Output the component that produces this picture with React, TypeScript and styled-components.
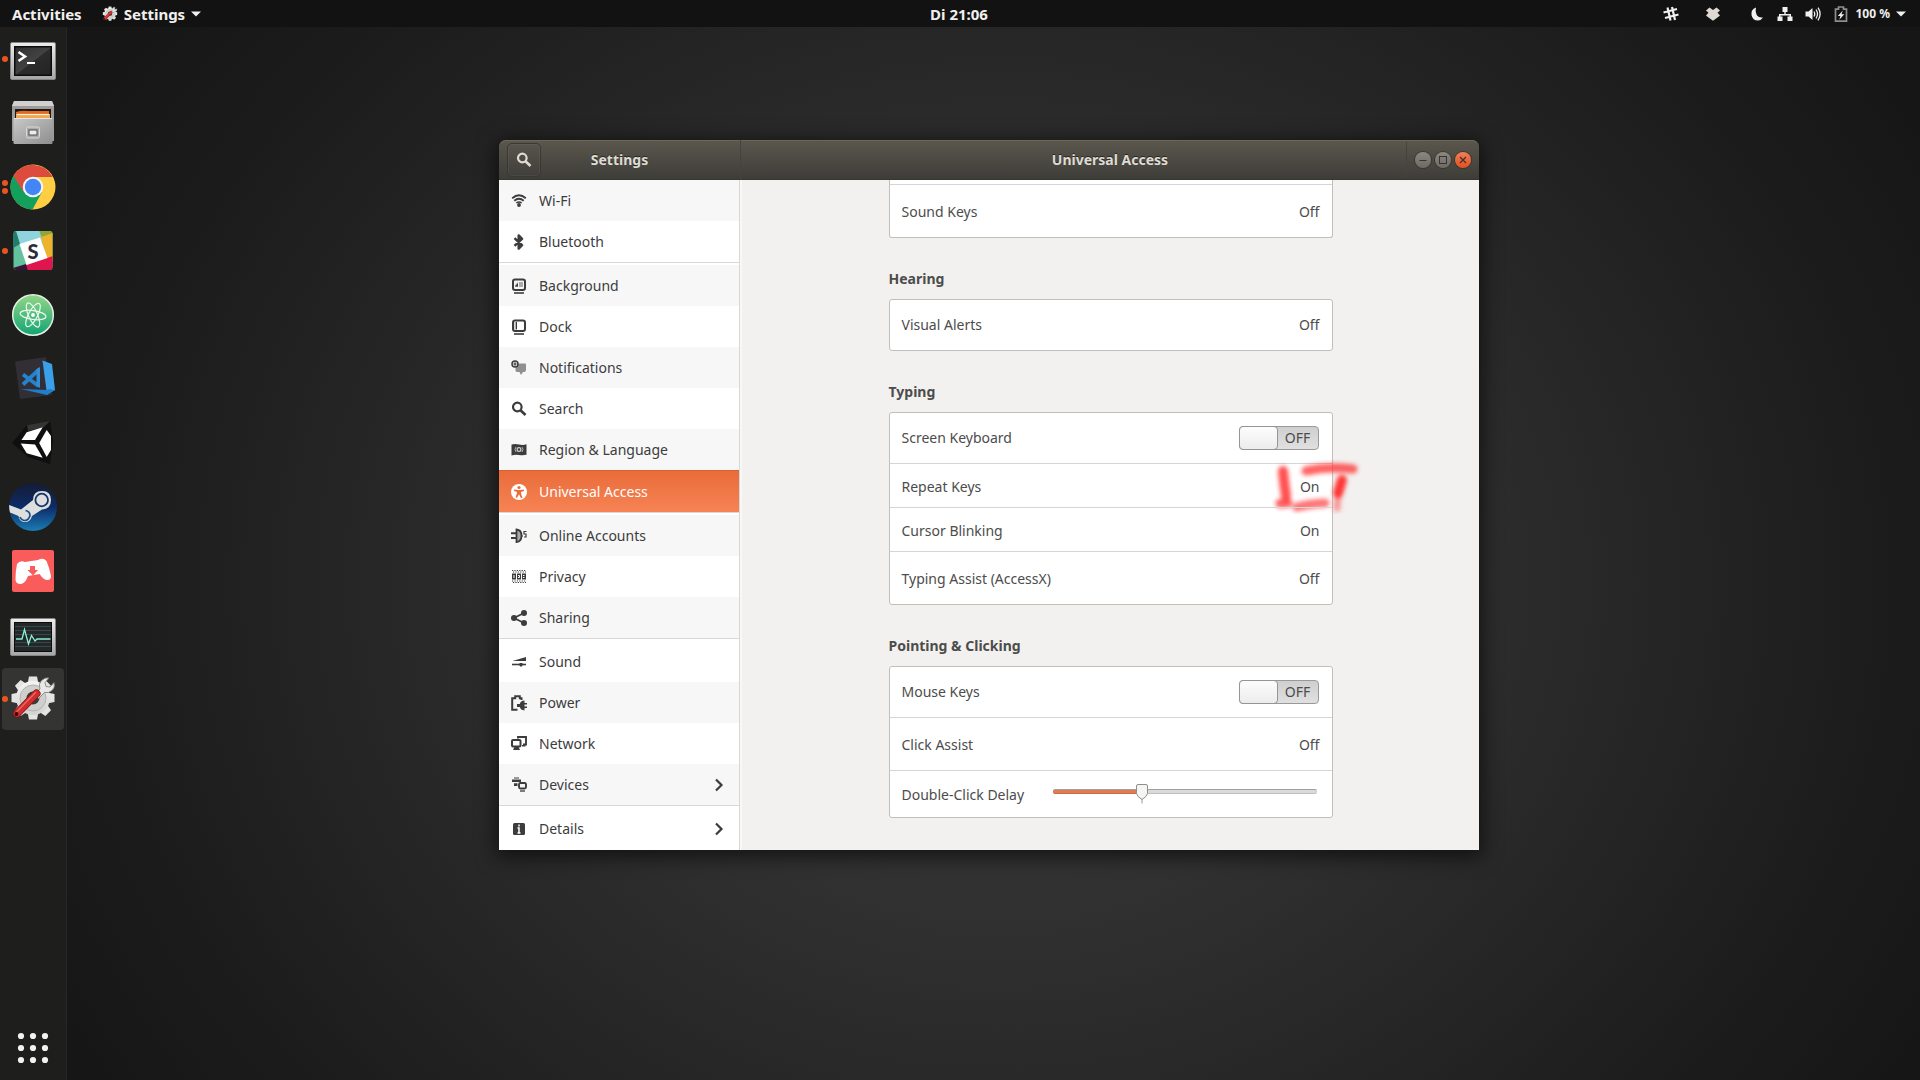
import React from "react";
import styled, { createGlobalStyle, css } from "styled-components";

const GlobalStyle = createGlobalStyle`
  * { box-sizing: border-box; }
  html, body { margin: 0; padding: 0; }
  body {
    font-family: "Noto Sans", "Open Sans", sans-serif;
    font-size: 14px;
    line-height: 20px;
    background: #161616;
    overflow: hidden;
  }
  button { font: inherit; color: inherit; border: 0; background: none; padding: 0; }
`;

/* ---------- shell ---------- */

const Screen = styled.div`
  display: flex;
  flex-direction: column;
  height: 100vh;
  background: radial-gradient(ellipse 56% 86% at 52% 54%, #383838 0%, #313131 35%, #262626 60%, #1c1c1c 82%, #161616 100%);
`;

const TopBar = styled.header`
  display: grid;
  grid-template-columns: 1fr auto 1fr;
  align-items: center;
  height: 27px;
  padding: 0 14px 0 12px;
  background: #121212;
  color: #f0f0ee;
  font-weight: 700;
  flex: none;
`;

const BarGroup = styled.div<{ $end?: boolean; $gap: number }>`
  display: flex;
  align-items: center;
  justify-content: ${(p) => (p.$end ? "flex-end" : "flex-start")};
  gap: ${(p) => p.$gap}px;
`;

const BarButton = styled.button<{ $small?: boolean }>`
  display: flex;
  align-items: center;
  gap: 6px;
  font-weight: 700;
  font-size: ${(p) => (p.$small ? 12 : 15)}px;
  svg { flex: none; }
`;

const TrayGroup = styled.div`
  display: flex;
  align-items: center;
  gap: 26px;
`;

const Workspace = styled.div`
  display: flex;
  flex: 1;
  min-height: 0;
`;

const Dock = styled.nav`
  display: flex;
  flex-direction: column;
  gap: 2px;
  padding: 1px 2px;
  flex: none;
  background: #1e1e1c;
  border-right: 1px solid #272725;
`;

const DockItem = styled.button<{ $active?: boolean; $last?: boolean }>`
  position: relative;
  display: flex;
  align-items: center;
  justify-content: center;
  width: 62px;
  height: 62px;
  border-radius: 4px;
  background: ${(p) => (p.$active ? "#343432" : "transparent")};
  margin-top: ${(p) => (p.$last ? "auto" : "0")};
`;

const Running = styled.span`
  position: absolute;
  left: 0;
  top: 0;
  bottom: 0;
  display: flex;
  flex-direction: column;
  justify-content: center;
  gap: 2px;
`;

const Dot = styled.i`
  width: 6px;
  height: 6px;
  border-radius: 50%;
  background: #e95420;
`;

const Desktop = styled.main`
  position: relative;
  flex: 1;
`;

/* ---------- window ---------- */

const Window = styled.section`
  position: absolute;
  left: 432px;
  top: 113px;
  width: 980px;
  border-radius: 7px 7px 0 0;
  box-shadow: 0 4px 20px 3px rgba(0, 0, 0, 0.6);
  color: #3c3c3c;
`;

const TitleBar = styled.div`
  display: grid;
  grid-template-columns: 242px 1fr;
  height: 40px;
  border-radius: 7px 7px 0 0;
  background: linear-gradient(#5b574d, #3d3c38);
  box-shadow: inset 0 1px #6b675c, inset 0 -1px #373632;
  color: #dfdbd2;
`;

const TitlePart = styled.div<{ $side: number; $line?: boolean }>`
  display: grid;
  grid-template-columns: ${(p) => p.$side}px 1fr ${(p) => p.$side}px;
  align-items: center;
  border-right: ${(p) => (p.$line ? "1px solid #45433d" : "0")};
`;

const Title = styled.h1`
  grid-column: 2;
  margin: 0;
  font-size: 14px;
  line-height: 20px;
  font-weight: 700;
  text-align: center;
  text-shadow: 0 -1px rgba(0, 0, 0, 0.5);
`;

const SearchButton = styled.button`
  display: flex;
  align-items: center;
  justify-content: center;
  width: 34px;
  height: 34px;
  margin-left: 8px;
  border: 1px solid #3a3832;
  border-radius: 5px;
  box-shadow: inset 0 0 0 1px rgba(255, 255, 255, 0.05);
`;

const WindowControls = styled.div`
  display: flex;
  align-items: center;
  justify-content: center;
  gap: 4px;
  height: 36px;
  border-left: 1px solid #45433d;
`;

const ControlButton = styled.button<{ $close?: boolean }>`
  display: flex;
  align-items: center;
  justify-content: center;
  width: 16px;
  height: 16px;
  border-radius: 50%;
  color: #35342f;
  background: ${(p) => (p.$close ? "linear-gradient(#f37e58, #e2501e)" : "linear-gradient(#8b8880, #6c6a63)")};
  box-shadow: 0 0 0 1px rgba(40, 38, 34, 0.5);
`;

const WindowBody = styled.div`
  display: grid;
  grid-template-columns: 240px 1fr;
`;

const Sidebar = styled.nav`
  background: #fff;
`;

const SidebarGroup = styled.ul`
  list-style: none;
  margin: 0;
  padding: 0;
  & + & {
    border-top: 1px solid #d8d8d8;
    padding-top: 2px;
  }
`;

const SidebarLink = styled.a<{ $shade?: boolean; $active?: boolean }>`
  display: flex;
  align-items: center;
  gap: 12px;
  height: 41px;
  padding: 0 12px;
  color: #3c3c3c;
  text-decoration: none;
  background: ${(p) => (p.$shade ? "#f7f7f7" : "#fff")};
  svg { flex: none; }
  span { flex: 1; }
  ${(p) =>
    p.$active &&
    css`
      height: 42px;
      color: #fff;
      background: linear-gradient(#e96c3a, #f78354);
      border-top: 1px solid #e0602e;
    `}
`;

const Content = styled.div`
  display: flex;
  flex-direction: column;
  align-items: center;
  padding: 0 0 32px 2px;
  border-left: 1px solid #d8d7d5;
  background: #f2f1ef;
  box-shadow: inset 2px 0 #f8f8f7;
  color: #4c4c4c;
`;

const Section = styled.section`
  width: 444px;
  max-width: 100%;
`;

const SectionTitle = styled.h2`
  margin: 0;
  padding: 31px 0 10px;
  font-size: 14px;
  line-height: 20px;
  font-weight: 700;
`;

const Card = styled.div<{ $continued?: boolean }>`
  background: #fff;
  border: 1px solid #c2bfbb;
  border-radius: ${(p) => (p.$continued ? "0 0 3px 3px" : "3px")};
  ${(p) => p.$continued && "border-top: 0; padding-top: 4px;"}
`;

const Row = styled.div<{ $h: number; $line?: boolean }>`
  position: relative;
  display: flex;
  align-items: center;
  justify-content: space-between;
  height: ${(p) => p.$h}px;
  padding: 0 12px;
  ${(p) =>
    p.$line &&
    css`
      height: ${p.$h + 1}px;
      padding-top: 2px;
      border-top: 1px solid #d5d5d5;
    `}
`;

const Value = styled.span``;

const Switch = styled.label`
  display: flex;
  width: 80px;
  height: 24px;
  margin-right: 1px;
  border: 1px solid #9b9996;
  border-radius: 4px;
  background: linear-gradient(#cfcfcf, #e0e0e0);
`;

const SwitchInput = styled.input`
  appearance: none;
  margin: -1px 0 -1px -1px;
  width: 39px;
  height: 24px;
  border: 1px solid #979592;
  border-radius: 4px;
  background: linear-gradient(#fdfdfd, #ececec);
`;

const SwitchText = styled.span`
  flex: 1;
  line-height: 22px;
  text-align: center;
`;

const sliderThumb =
  "url(\"data:image/svg+xml,%3Csvg xmlns='http://www.w3.org/2000/svg' width='12' height='20'%3E%3Cpath d='M6 15v4.500' stroke='%23999'/%3E%3Cpath d='M2 .5h8q1.500 0 1.500 1.500v7.500Q10.500 13 6 15.500Q1.500 13 .5 9.500V2Q.5 .5 2 .5z' fill='%23f5f5f5' stroke='%23908e8b'/%3E%3C/svg%3E\")";

const Slider = styled.input`
  appearance: none;
  width: 264px;
  height: 20px;
  margin: 0 3px 8px 0;
  background: none;
  &::-webkit-slider-runnable-track {
    height: 5px;
    border-radius: 2px;
    border-top: 1px solid #a3a09c;
    background: linear-gradient(90deg, #e27b50 0 33%, #dadada 33%);
    box-shadow: inset 0 -1px rgba(0, 0, 0, 0.12);
  }
  &::-webkit-slider-thumb {
    appearance: none;
    width: 12px;
    height: 20px;
    margin-top: -6px;
    border: 0;
    background: ${sliderThumb} no-repeat;
  }
`;

const Scribble = styled.svg`
  position: absolute;
  right: -32px;
  top: -10px;
  pointer-events: none;
`;

/* ---------- small icons (16 × 16) ---------- */

const glyphs: Record<string, React.ReactNode> = {
  wifi: (
    <g fill="none" stroke="currentColor" strokeWidth="1.8">
      <path d="M1.200 5.200Q8 -.6 14.800 5.200" />
      <path d="M3.300 7.700Q8 3.800 12.700 7.700" />
      <path d="M5.300 10Q8 7.800 10.700 10" strokeWidth="1.500" />
      <circle cx="8" cy="12" r="1.900" fill="currentColor" stroke="none" />
    </g>
  ),
  bluetooth: <path d="M3.500 4.200L11 11.200L7.700 14.500V1.500L11 4.800L3.500 11.800" fill="none" stroke="currentColor" strokeWidth="2.500" strokeLinejoin="round" />,
  background: (
    <>
      <rect x="2" y="1.500" width="12" height="10.500" rx="2" fill="none" stroke="currentColor" strokeWidth="2" />
      <path d="M7 4v5H4v-2zM8 4h4v5H8z" fill="currentColor" opacity=".4" />
      <path d="M4 8.500L7 5v3.500z" fill="currentColor" />
      <path d="M3 15h10" stroke="currentColor" strokeWidth="1.600" />
    </>
  ),
  dock: (
    <>
      <rect x="2" y="1.500" width="12" height="10.500" rx="2" fill="none" stroke="currentColor" strokeWidth="2" />
      <path d="M5.500 3v7.500" stroke="currentColor" />
      <path d="M3.500 3h1.500v7.500H3.500z" fill="currentColor" opacity=".4" />
      <path d="M3 15h10" stroke="currentColor" strokeWidth="1.600" />
    </>
  ),
  notifications: (
    <>
      <path d="M8 3.500h6q1 0 1 1V10q0 2-2 2h-1l-2 3-1.500-3H6q-1.500 0-1.500-2V8z" fill="currentColor" opacity=".55" />
      <circle cx="4" cy="4" r="3" fill="#fff" stroke="currentColor" strokeWidth="1.500" />
      <path d="M4 2.300v3.400M2.300 4h3.400" stroke="currentColor" strokeWidth="1.200" />
    </>
  ),
  search: (
    <g fill="none" stroke="currentColor">
      <circle cx="6.300" cy="6" r="4.300" strokeWidth="2.200" />
      <path d="M9.500 9.200L14.500 14" strokeWidth="2.600" />
    </g>
  ),
  region: (
    <>
      <path d="M.5 2.500Q4 1.500 8 2.500T15.500 2.200V12.800Q12 13.600 8 13T.5 13.500z" fill="currentColor" />
      <g fill="none" stroke="#d0d0d0" strokeWidth=".8">
        <circle cx="8" cy="7.500" r="1.900" strokeWidth="1.200" />
        <path d="M5 5Q3 7.500 5 10M11 5Q13 7.500 11 10" />
      </g>
    </>
  ),
  access: (
    <>
      <circle cx="8" cy="8" r="8" fill="#fff" />
      <circle cx="8" cy="3.500" r="1.600" fill="#e96c3a" />
      <path d="M3 5.500l3.500.6h3l3.500-.6v1.600l-3 .9.300 2.500 1.200 3.200-1.500.5L8 10.200l-2 3.500-1.500-.5 1.200-3.200.3-2-3-.9z" fill="#e96c3a" />
    </>
  ),
  accounts: (
    <>
      <path d="M5.500 1.500Q10.500 2 10.500 7.700T5.500 14z" fill="#aaa" stroke="currentColor" strokeWidth="1.800" />
      <path d="M0 5.200h5M0 10h5" stroke="currentColor" strokeWidth="2" />
      <path d="M10.500 8h1.500M15.500 3.500h-2.500v2.500h2v3h-2" fill="none" stroke="currentColor" strokeWidth="1.200" />
    </>
  ),
  privacy: (
    <>
      <path d="M1 1.500h14M2 3h13M1 12h14M2 13.500h13" stroke="currentColor" strokeDasharray="1.200 1.200" />
      <path d="M1 4.500h4v6H1zM6 4.500h4v6H6zM11 4.500h4v6h-4z" fill="currentColor" />
      <path d="M3 6v3M7 6.500h1.500v2H7M12 6.500h1.500M12 8.500h1.500" stroke="#fff" fill="none" />
    </>
  ),
  sharing: (
    <>
      <path d="M13 3L3 8l10 5" fill="none" stroke="currentColor" strokeWidth="1.800" />
      <circle cx="13" cy="3" r="3" fill="currentColor" />
      <circle cx="3" cy="8" r="3" fill="currentColor" />
      <circle cx="13" cy="13" r="3" fill="currentColor" />
    </>
  ),
  sound: (
    <>
      <path d="M1.500 7L15 3v4z" fill="currentColor" />
      <path d="M1 10.500h14" stroke="currentColor" strokeWidth="1.600" />
      <path d="M8.500 9h3v2.500l-1.500 1.500-1.500-1.500z" fill="currentColor" />
    </>
  ),
  power: (
    <>
      <path d="M10.500 5V3.200H8.800V1.200H4.200V3.200H1.200V14.800H6.500" fill="none" stroke="currentColor" strokeWidth="2" />
      <path d="M13.500 5.500q-4 .3-4.700 3.500H6v3h2.800q.7 3 4.700 3.500v-2.500H16v-1.500h-2.500V9.500H16V8h-2.500z" fill="currentColor" />
    </>
  ),
  network: (
    <>
      <path d="M7 2.500V1h8v7.500h-3" fill="none" stroke="currentColor" strokeWidth="1.900" />
      <path d="M11 9h3.500v1.500H11z" fill="currentColor" />
      <rect x="1" y="4" width="8.500" height="6.500" rx="1" fill="none" stroke="currentColor" strokeWidth="2" />
      <path d="M3.500 11h4l1.500 3h-7z" fill="currentColor" />
    </>
  ),
  devices: (
    <>
      <path d="M3 1h5" stroke="currentColor" />
      <path d="M1 2.500h9V5H1zM3 6.200h3.500v2.800H3z" fill="currentColor" />
      <rect x="8" y="6" width="7" height="5.500" rx="1.500" fill="none" stroke="currentColor" strokeWidth="1.900" />
      <path d="M9 14h5" stroke="currentColor" strokeWidth="1.300" />
    </>
  ),
  details: (
    <>
      <rect x="2" y="2" width="12" height="12" rx="1.500" fill="currentColor" />
      <path d="M8 3.500v2M6.500 7H8v5M6.500 12h3" stroke="#fff" strokeWidth="1.500" fill="none" />
    </>
  ),
  chevron: <path d="M5 2.500l5.500 5.500L5 13.500" fill="none" stroke="currentColor" strokeWidth="2.200" />,
  hash: <path d="M4.500 1.500l3 13M9 1l3 13M.5 6.500L14 3M2 12l13.500-3.500" stroke="currentColor" strokeWidth="2.200" />,
  dropbox: <path d="M4.500 1.500L8 4l3.500-2.500L15 4.500l-2.500 2.300L15 9.500l-2.500 2L8 14.800 3.500 11.500 1 9.500l2.500-2.700L1 4.500z" fill="#dedad2" />,
  moon: <path d="M7 1.500Q1.500 3.500 2.500 9T9 14.500q3 0 5-3Q9 12 7.500 8.500T7 1.500z" fill="currentColor" />,
  lan: <path d="M5.500 1h5v5H8.700v2H14v2.500h1.500V15h-5v-4.500h2V9.400h-9v1.100h2V15H.5v-4.500H2V8h5.300V6H5.500z" fill="currentColor" />,
  volume: (
    <>
      <path d="M.5 5.500h3L7.500 2v12l-4-3.500h-3z" fill="currentColor" />
      <path d="M9 5.500q1.500 2.500 0 5M11 3.500q3 4.500 0 9M13 1.700q4.200 6.300 0 12.600" fill="none" stroke="currentColor" strokeWidth="1.300" />
    </>
  ),
  battery: (
    <>
      <path d="M2.500 3.200h3V1h5v2.200h3v12h-11z" fill="none" stroke="#8e8e8c" strokeWidth="1.700" />
      <path d="M9.800 4.500L4.800 10h2.600L6.300 13.800l5-5.500H8.500z" fill="currentColor" />
    </>
  ),
};

const Glyph = ({ name, size = 16 }: { name: string; size?: number }) => (
  <svg width={size} height={size} viewBox="0 0 16 16" aria-hidden="true">
    {glyphs[name]}
  </svg>
);

const Caret = () => (
  <svg width="10" height="6" viewBox="0 0 10 6" aria-hidden="true">
    <path d="M0 .5h10L5 5.500z" fill="currentColor" />
  </svg>
);

/* ---------- dock icons (48 × 48) ---------- */

const teeth = Array.from({ length: 8 }, (_, i) => i * 45);

const GearArt = () => (
  <>
    <defs>
      <linearGradient id="gearFill" x1="0" y1="0" x2="0" y2="1">
        <stop offset="0" stopColor="#f4f4f2" />
        <stop offset="1" stopColor="#d2d2d0" />
      </linearGradient>
    </defs>
    <g fill="#e4e4e2">
      {teeth.map((a) => (
        <path key={a} d="M18.500 9L20 1.500h8L29.500 9z" transform={`rotate(${a} 24 23)`} />
      ))}
    </g>
    <circle cx="24" cy="23" r="17" fill="url(#gearFill)" />
    <circle cx="24" cy="23" r="13" fill="#cfcfcd" stroke="#aaa" strokeWidth=".8" />
    <circle cx="24" cy="23" r="6.500" fill="#3b3b39" />
    <path d="M25 20l6-6q-2-5 1.500-8.500t7.500-2.500l-4 4.500 1 4 4 .5 4-4.500q1.500 5-2 8t-7.500 2l-6 6z" fill="#e8e8e6" stroke="#777" strokeWidth=".8" />
    <path d="M27.500 18.500L8 38.500" stroke="#7e1012" strokeWidth="8" strokeLinecap="round" />
    <path d="M27.500 18.500L8 38.500" stroke="#d22d2d" strokeWidth="6.600" strokeLinecap="round" />
    <path d="M26.500 17.500L8 36.500" stroke="#ec6a66" strokeWidth="1.300" strokeLinecap="round" />
    <circle cx="7.500" cy="39" r="1.900" fill="#3a0a0b" />
  </>
);

const Frame = ({ id }: { id: string }) => (
  <>
    <defs>
      <linearGradient id={`${id}Frame`} x1="0" y1="0" x2="0" y2="1">
        <stop offset="0" stopColor="#ededed" />
        <stop offset="1" stopColor="#a6a6a6" />
      </linearGradient>
      <linearGradient id={`${id}Glass`} x1="0" y1="0" x2="1" y2="1">
        <stop offset="0" stopColor="#303030" />
        <stop offset=".5" stopColor="#424242" />
        <stop offset=".52" stopColor="#2c2c2c" />
        <stop offset="1" stopColor="#242424" />
      </linearGradient>
    </defs>
    <rect x="1.500" y="7.500" width="45" height="37" rx="1.500" fill={`url(#${id}Frame)`} stroke="#858585" />
    <rect x="5" y="11" width="38" height="30" fill="#0c0c0c" />
  </>
);

const dockArt: Record<string, React.ReactNode> = {
  Terminal: (
    <>
      <Frame id="term" />
      <rect x="6.500" y="12.500" width="35" height="27" fill="url(#termGlass)" />
      <path d="M9.500 17l6.500 4.500-6.500 4.500" fill="none" stroke="#fff" strokeWidth="2.600" />
      <path d="M18 28h8" stroke="#fff" strokeWidth="2" />
    </>
  ),
  Files: (
    <>
      <defs>
        <linearGradient id="drawer" x1="0" y1="0" x2="1" y2="1">
          <stop offset="0" stopColor="#c9c9c9" />
          <stop offset="1" stopColor="#8d8d8d" />
        </linearGradient>
      </defs>
      <path d="M5 2h38l2 5v35H3V7z" fill="#9c9c9c" />
      <path d="M5 2h38l2 5H3z" fill="#d0d0d0" />
      <rect x="6" y="10" width="36" height="11" fill="#1e1712" />
      <path d="M7 13q6-2 12-1h21v8H7z" fill="#e06a24" />
      <path d="M7 15h34v6H7z" fill="#f3a850" />
      <path d="M8 15.500h32" stroke="#fff3df" strokeWidth="1.200" />
      <rect x="4.500" y="19" width="39" height="26" rx="1" fill="url(#drawer)" />
      <path d="M5 19.500h38" stroke="#e5e5e5" />
      <rect x="17.500" y="28" width="13" height="11" rx="1.500" fill="#ababab" stroke="#d8d8d8" />
      <rect x="20" y="31" width="8" height="5" fill="#ededed" stroke="#4c4c4c" />
    </>
  ),
  Chrome: (
    <>
      <circle cx="24" cy="24" r="22.500" fill="#ffce42" />
      <path d="M24 24L4.500 12.700A22.500 22.500 0 0 0 23.500 46.500L33 29z" fill="#13a05c" />
      <path d="M4.500 12.700A22.500 22.500 0 0 1 43.700 14H24L14 28.500z" fill="#dd4b3e" />
      <circle cx="24" cy="24" r="10.300" fill="#f4f4f4" />
      <circle cx="24" cy="24" r="8.200" fill="#4285f4" />
    </>
  ),
  Slack: (
    <>
      <defs>
        <clipPath id="slackClip">
          <rect x="4.500" y="4" width="39" height="39" rx="3" />
        </clipPath>
      </defs>
      <g clipPath="url(#slackClip)">
        <rect width="48" height="48" fill="#63c1a0" />
        <path d="M4 4h36v10L11 17z" fill="#8fd3dd" />
        <path d="M4 4h3l4 13-7 4z" fill="#1f7d6a" />
        <path d="M30 3h15v4L33 12z" fill="#8fa63c" />
        <path d="M32 10l12-4v28l-6 2z" fill="#ecb32d" />
        <path d="M17 38l27-9v15H17z" fill="#df1550" />
        <path d="M4 41l13-4 2 7H4z" fill="#371438" />
      </g>
      <path d="M10.500 17L31 10.500 38.500 31 17.500 38z" fill="#fff" />
      <text x="24" y="31.500" textAnchor="middle" fontFamily="Lato, sans-serif" fontWeight="900" fontSize="20" fill="#2b2e38">S</text>
    </>
  ),
  Atom: (
    <>
      <defs>
        <linearGradient id="atomFill" x1="0" y1="0" x2="0" y2="1">
          <stop offset="0" stopColor="#93d687" />
          <stop offset="1" stopColor="#12a473" />
        </linearGradient>
      </defs>
      <circle cx="24" cy="24" r="20.300" fill="url(#atomFill)" stroke="#e6efe6" strokeWidth="1.500" />
      <g fill="none" stroke="#e9f8ec" strokeWidth="1.200">
        <ellipse cx="24" cy="24" rx="13" ry="4.500" transform="rotate(8 24 24)" />
        <ellipse cx="24" cy="24" rx="13" ry="4.500" transform="rotate(66 24 24)" />
        <ellipse cx="24" cy="24" rx="13" ry="4.500" transform="rotate(118 24 24)" />
      </g>
      <circle cx="24" cy="24" r="1.900" fill="#fff" />
    </>
  ),
  "Visual Studio Code": (
    <>
      <path d="M6 6.500L37 2l6 38-32 4z" fill="#312f35" />
      <path d="M33.500 5.500L43 9l3 26-8 4z" fill="#3ba0ea" />
      <path d="M12 34l26 1 2-1 6 1-8 5z" fill="#1f7fcb" />
      <path d="M29.500 15L14 29.500M14 19.500L29.500 31" stroke="#2583cb" strokeWidth="3.800" />
      <path d="M27.500 14l3.500-2v21l-3.500-2z" fill="#2f8fd6" />
    </>
  ),
  Unity: (
    <>
      <path d="M3 24L18 6 41 2l3 20-3 23-22-7z" fill="#0f0f0f" />
      <path d="M18 6L41 2l-6 6-16 4z" fill="#343434" />
      <g fill="#fff">
        <path d="M12.500 21l5.200-7.700L33.700 8.300 26 21z" />
        <path d="M11.700 24.500L26 25.500l7.700 13.200-16-4.400z" />
        <path d="M37.700 11l4.300 6v14l-4.300 7-7.500-14z" />
      </g>
    </>
  ),
  Steam: (
    <>
      <defs>
        <linearGradient id="steamFill" x1="0" y1="0" x2="0" y2="1">
          <stop offset="0" stopColor="#141c35" />
          <stop offset=".5" stopColor="#0c2b68" />
          <stop offset="1" stopColor="#1b7cb5" />
        </linearGradient>
      </defs>
      <circle cx="24" cy="24" r="24" fill="url(#steamFill)" />
      <path d="M.2 22L12 26.500 24 17q0-9 9-9t9 9-9 9.500L23 33q-1.500 6-7 6t-6.500-6L1 29.500q-1-4-.8-7.500z" fill="#dedede" />
      <circle cx="32.700" cy="17" r="6.300" fill="#dedede" stroke="#12356c" strokeWidth="1.800" />
      <path d="M11 34q1.500 3.500 5 3.500t5-5q0-4-4.500-5" fill="none" stroke="#1a4f8c" strokeWidth="1.700" />
    </>
  ),
  Games: (
    <>
      <rect x="3" y="3" width="42" height="42" rx="2" fill="#fa5c5c" />
      <path d="M8 17q3-4 8-2l13-2q5-3 8.500 1 3 7 4.500 15 0 4-3.500 4-4 0-8-6L19 29q-3 8-7.500 8T6.500 33q0-9 1.500-16z" fill="#fff" />
      <path d="M21 19h5v4h3l-5 5.500L18.500 23H21z" fill="#fa5c5c" />
    </>
  ),
  "System Monitor": (
    <>
      <Frame id="mon" />
      <rect x="6" y="12" width="36" height="28" fill="#20282a" />
      <path d="M6 15.500h36M6 19.500h36M6 23.500h36M6 31.500h36M6 35.500h36" stroke="#454d50" strokeWidth=".8" />
      <path d="M7 28h6l2.500-9.500L19.500 33l3-8.500L26 30l2-2h13.500" fill="none" stroke="#8cf0d2" strokeWidth="1.300" />
    </>
  ),
  Settings: <GearArt />,
};

const dockItems: { name: string; running?: number; active?: boolean }[] = [
  { name: "Terminal", running: 1 },
  { name: "Files" },
  { name: "Chrome", running: 2 },
  { name: "Slack", running: 1 },
  { name: "Atom" },
  { name: "Visual Studio Code" },
  { name: "Unity" },
  { name: "Steam" },
  { name: "Games" },
  { name: "System Monitor" },
  { name: "Settings", running: 1, active: true },
];

/* ---------- data ---------- */

type Entry = { label: string; icon: string; shade?: boolean; active?: boolean; more?: boolean };

const groups: Entry[][] = [
  [
    { label: "Wi-Fi", icon: "wifi", shade: true },
    { label: "Bluetooth", icon: "bluetooth" },
  ],
  [
    { label: "Background", icon: "background", shade: true },
    { label: "Dock", icon: "dock" },
    { label: "Notifications", icon: "notifications", shade: true },
    { label: "Search", icon: "search" },
    { label: "Region & Language", icon: "region", shade: true },
    { label: "Universal Access", icon: "access", active: true },
  ],
  [
    { label: "Online Accounts", icon: "accounts", shade: true },
    { label: "Privacy", icon: "privacy" },
    { label: "Sharing", icon: "sharing", shade: true },
  ],
  [
    { label: "Sound", icon: "sound" },
    { label: "Power", icon: "power", shade: true },
    { label: "Network", icon: "network" },
    { label: "Devices", icon: "devices", shade: true, more: true },
  ],
  [{ label: "Details", icon: "details", more: true }],
];

const Toggle = ({ label }: { label: string }) => (
  <Switch>
    <SwitchInput type="checkbox" role="switch" aria-label={label} />
    <SwitchText>OFF</SwitchText>
  </Switch>
);

const ValueRow = ({ label, value, h, line, children }: { label: string; value: string; h: number; line?: boolean; children?: React.ReactNode }) => (
  <Row $h={h} $line={line}>
    <span>{label}</span>
    <Value>{value}</Value>
    {children}
  </Row>
);

const RedMark = () => (
  <Scribble width="92" height="60" viewBox="1272 454 92 60" aria-hidden="true">
    <defs>
      <filter id="soft" x="-20%" y="-20%" width="140%" height="140%">
        <feGaussianBlur stdDeviation="2" />
      </filter>
    </defs>
    <g fill="none" stroke="#ff2a2a" strokeLinecap="round" filter="url(#soft)">
      <path d="M1283 471Q1284 483 1286 496" strokeWidth="10" opacity=".82" />
      <path d="M1280 503.500L1288 503" strokeWidth="9" opacity=".75" />
      <path d="M1297 507Q1308 504 1325 503" strokeWidth="9" opacity=".65" />
      <path d="M1306 471Q1328 466 1353 469" strokeWidth="9" opacity=".72" />
      <path d="M1342 480L1338 493" strokeWidth="10" opacity=".95" />
      <path d="M1338 496L1337 508" strokeWidth="7" opacity=".45" />
    </g>
  </Scribble>
);

export default function App() {
  return (
    <Screen>
      <GlobalStyle />
      <TopBar>
        <BarGroup $gap={20}>
          <BarButton>Activities</BarButton>
          <BarButton>
            <svg width="16" height="16" viewBox="0 0 48 48" aria-hidden="true">
              <GearArt />
            </svg>
            Settings
            <Caret />
          </BarButton>
        </BarGroup>
        <BarButton>Di 21:06</BarButton>
        <BarGroup $end $gap={28}>
          <TrayGroup>
            <Glyph name="hash" />
            <Glyph name="dropbox" />
          </TrayGroup>
          <BarGroup $gap={12}>
            <Glyph name="moon" />
            <Glyph name="lan" />
            <Glyph name="volume" />
            <BarButton $small>
              <Glyph name="battery" />
              100 %
              <Caret />
            </BarButton>
          </BarGroup>
        </BarGroup>
      </TopBar>

      <Workspace>
        <Dock aria-label="Dock">
          {dockItems.map((d) => (
            <DockItem key={d.name} $active={d.active} aria-label={d.name}>
              {d.running && (
                <Running>
                  {Array.from({ length: d.running }, (_, i) => (
                    <Dot key={i} />
                  ))}
                </Running>
              )}
              <svg width="48" height="48" viewBox="0 0 48 48" aria-hidden="true">
                {dockArt[d.name]}
              </svg>
            </DockItem>
          ))}
          <DockItem $last aria-label="Show Applications">
            <svg width="48" height="48" viewBox="0 0 48 48" aria-hidden="true" fill="#f2f2f0">
              {[12, 24, 36].map((y) => [12, 24, 36].map((x) => <circle key={`${x}-${y}`} cx={x} cy={y} r="3.100" />))}
            </svg>
          </DockItem>
        </Dock>

        <Desktop>
          <Window aria-label="Settings">
            <TitleBar>
              <TitlePart $side={48} $line>
                <SearchButton aria-label="Search">
                  <Glyph name="search" />
                </SearchButton>
                <Title>Settings</Title>
              </TitlePart>
              <TitlePart $side={73}>
                <Title>Universal Access</Title>
                <WindowControls>
                  <ControlButton aria-label="Minimize">
                    <svg width="10" height="10"><path d="M1.500 5.500h7" stroke="currentColor" /></svg>
                  </ControlButton>
                  <ControlButton aria-label="Maximize">
                    <svg width="10" height="10"><rect x="1.500" y="1.500" width="7" height="7" fill="none" stroke="currentColor" /></svg>
                  </ControlButton>
                  <ControlButton $close aria-label="Close">
                    <svg width="10" height="10"><path d="M2 2l6 6M8 2l-6 6" stroke="currentColor" strokeWidth="1.200" /></svg>
                  </ControlButton>
                </WindowControls>
              </TitlePart>
            </TitleBar>

            <WindowBody>
              <Sidebar aria-label="Settings panels">
                {groups.map((group, i) => (
                  <SidebarGroup key={i}>
                    {group.map((e) => (
                      <li key={e.label}>
                        <SidebarLink href="#" $shade={e.shade} $active={e.active}>
                          <Glyph name={e.icon} />
                          <span>{e.label}</span>
                          {e.more && <Glyph name="chevron" />}
                        </SidebarLink>
                      </li>
                    ))}
                  </SidebarGroup>
                ))}
              </Sidebar>

              <Content>
                <Section>
                  <Card $continued>
                    <ValueRow label="Sound Keys" value="Off" h={52} line />
                  </Card>
                </Section>

                <Section>
                  <SectionTitle>Hearing</SectionTitle>
                  <Card>
                    <ValueRow label="Visual Alerts" value="Off" h={50} />
                  </Card>
                </Section>

                <Section>
                  <SectionTitle>Typing</SectionTitle>
                  <Card>
                    <Row $h={50}>
                      <span>Screen Keyboard</span>
                      <Toggle label="Screen Keyboard" />
                    </Row>
                    <ValueRow label="Repeat Keys" value="On" h={43} line>
                      <RedMark />
                    </ValueRow>
                    <ValueRow label="Cursor Blinking" value="On" h={43} line />
                    <ValueRow label="Typing Assist (AccessX)" value="Off" h={52} line />
                  </Card>
                </Section>

                <Section>
                  <SectionTitle>Pointing &amp; Clicking</SectionTitle>
                  <Card>
                    <Row $h={50}>
                      <span>Mouse Keys</span>
                      <Toggle label="Mouse Keys" />
                    </Row>
                    <ValueRow label="Click Assist" value="Off" h={52} line />
                    <Row $h={46} $line>
                      <label htmlFor="delay">Double-Click Delay</label>
                      <Slider id="delay" type="range" min="0" max="100" defaultValue="33" />
                    </Row>
                  </Card>
                </Section>
              </Content>
            </WindowBody>
          </Window>
        </Desktop>
      </Workspace>
    </Screen>
  );
}
